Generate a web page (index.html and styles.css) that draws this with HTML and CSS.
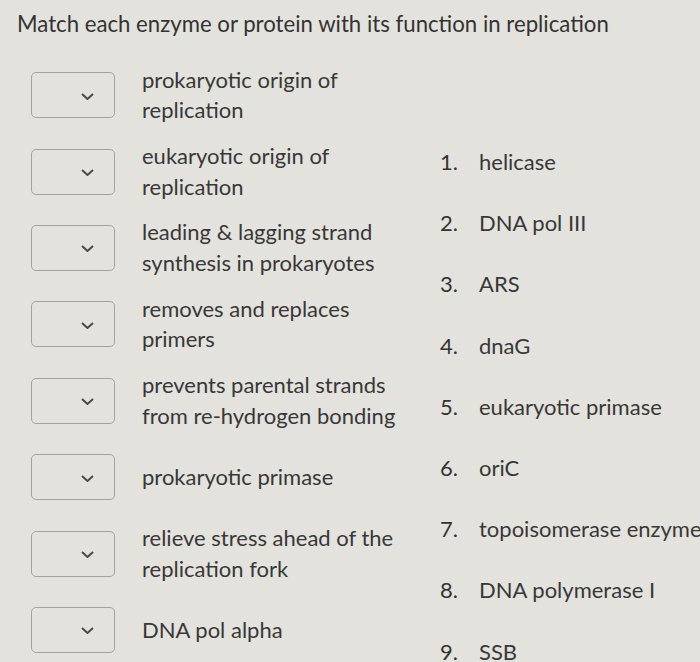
FILE: index.html
```html
<!DOCTYPE html>
<html>
<head>
<meta charset="utf-8">
<link rel="stylesheet" href="styles.css">
</head>
<body>
<div class="page">
  <h1 class="title">Match each enzyme or protein with its function in replication</h1>
  <div class="cols">
    <div class="left">
      <div class="row"><div class="select"><svg class="chev" viewBox="0 0 13 7"><path d="M1 1l5.5 5 5.5-5"/></svg></div><div class="label">prokaryotic origin of<br>replication</div></div>
      <div class="row"><div class="select"><svg class="chev" viewBox="0 0 13 7"><path d="M1 1l5.5 5 5.5-5"/></svg></div><div class="label">eukaryotic origin of<br>replication</div></div>
      <div class="row"><div class="select"><svg class="chev" viewBox="0 0 13 7"><path d="M1 1l5.5 5 5.5-5"/></svg></div><div class="label">leading &amp; lagging strand<br>synthesis in prokaryotes</div></div>
      <div class="row"><div class="select"><svg class="chev" viewBox="0 0 13 7"><path d="M1 1l5.5 5 5.5-5"/></svg></div><div class="label">removes and replaces<br>primers</div></div>
      <div class="row"><div class="select"><svg class="chev" viewBox="0 0 13 7"><path d="M1 1l5.5 5 5.5-5"/></svg></div><div class="label">prevents parental strands<br>from re-hydrogen bonding</div></div>
      <div class="row"><div class="select"><svg class="chev" viewBox="0 0 13 7"><path d="M1 1l5.5 5 5.5-5"/></svg></div><div class="label">prokaryotic primase</div></div>
      <div class="row"><div class="select"><svg class="chev" viewBox="0 0 13 7"><path d="M1 1l5.5 5 5.5-5"/></svg></div><div class="label">relieve stress ahead of the<br>replication fork</div></div>
      <div class="row"><div class="select"><svg class="chev" viewBox="0 0 13 7"><path d="M1 1l5.5 5 5.5-5"/></svg></div><div class="label">DNA pol alpha</div></div>
    </div>
    <ol class="right">
      <li><span class="num">1.</span><span>helicase</span></li>
      <li><span class="num">2.</span><span>DNA pol III</span></li>
      <li><span class="num">3.</span><span>ARS</span></li>
      <li><span class="num">4.</span><span>dnaG</span></li>
      <li><span class="num">5.</span><span>eukaryotic primase</span></li>
      <li><span class="num">6.</span><span>oriC</span></li>
      <li><span class="num">7.</span><span>topoisomerase enzyme</span></li>
      <li><span class="num">8.</span><span>DNA polymerase I</span></li>
      <li><span class="num">9.</span><span>SSB</span></li>
    </ol>
  </div>
</div>
</body>
</html>
```

FILE: styles.css
```css
html, body {
  margin: 0;
  padding: 0;
  background: #e3e2dd;
}
.page {
  width: 700px;
  height: 662px;
  overflow: hidden;
  font-family: Lato, "Open Sans", sans-serif;
  color: #383838;
}
.title {
  margin: 0;
  padding: 9px 0 0 17px;
  font-size: 22.2px;
  font-weight: 400;
  line-height: 30px;
  color: #333;
  white-space: nowrap;
}
.cols {
  display: flex;
}
.left {
  width: 410px;
  flex-shrink: 0;
  padding-top: 18px;
  display: flex;
  flex-direction: column;
}
.row {
  height: 76.4px;
  display: flex;
  align-items: center;
}
.select {
  width: 62px;
  height: 44px;
  margin-left: 31px;
  padding-right: 20px;
  border: 1px solid #a3a29e;
  border-radius: 5px;
  display: flex;
  align-items: center;
  justify-content: flex-end;
  flex-shrink: 0;
}
.chev {
  width: 13px;
  height: 7px;
  margin-top: 2px;
  fill: none;
  stroke: #4a4a4a;
  stroke-width: 2;
}
.label {
  margin-left: 27px;
  font-size: 22px;
  line-height: 30.5px;
  white-space: nowrap;
}
.right {
  list-style: none;
  margin: 0;
  padding: 92px 0 0 30px;
}
.right li {
  height: 61.2px;
  display: flex;
  align-items: center;
  font-size: 22px;
  white-space: nowrap;
}
.num {
  width: 39px;
  flex-shrink: 0;
  color: #333;
}
```
